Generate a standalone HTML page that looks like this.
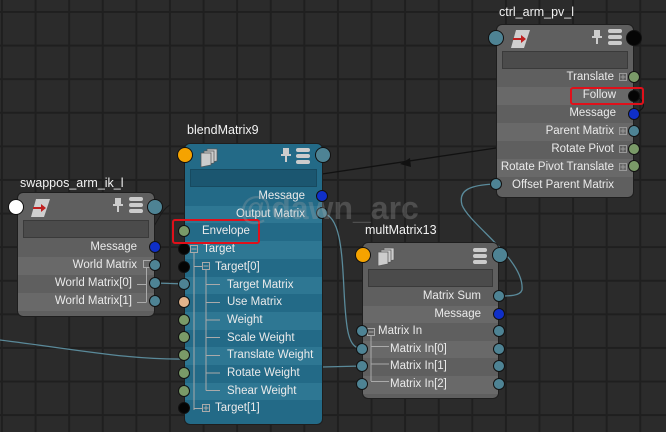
<!DOCTYPE html>
<html><head><meta charset="utf-8"><style>
*{margin:0;padding:0;box-sizing:border-box}
body{width:666px;height:432px;overflow:hidden;position:relative;font-family:"Liberation Sans",sans-serif;font-size:11.5px;
background-color:#2b2b2b;
background-image:linear-gradient(#1f1f1f 0 2px,transparent 2px),linear-gradient(90deg,#1f1f1f 0 2px,transparent 2px);
background-size:33.6px 33.6px;background-position:1px 11px}
.node{position:absolute;border:1px solid #1e1e1e;border-radius:6px;overflow:hidden}
.gray{background:#5f5f5f}
.blue{background:#236a87}
.title{position:absolute;color:#f2f2f2;font-size:12.5px;white-space:nowrap}
.search{position:absolute;left:5px;right:5px;height:18px;border:1px solid #3a3a3a}
.gray .search{background:#4b4b4b}
.blue .search{background:#1b5670;border-color:#174a60}
.row{position:absolute;left:0;right:0;color:#eaeaea;white-space:nowrap;line-height:17.7px;height:17.7px}
.gray .row.l{background:#696969}
.blue .row.l{background:#2e7793}
.r{text-align:right;padding-right:17px}
.p{position:absolute;width:12px;height:12px;border-radius:50%;border:1px solid #111;margin:-0.5px}
.big{width:16px;height:16px}
.g{background:#7a9a68}.b{background:#0f2fc8}.t{background:#4e8394}.k{background:#050505}.o{background:#f5a300}.w{background:#fff}.pe{background:#e2b48c}
.hl{position:absolute;border:2px solid #e0101a;border-radius:3px}
.wm{position:absolute;left:240px;top:190px;font-size:32px;font-weight:bold;color:rgba(170,170,170,0.28);white-space:nowrap;z-index:10}
</style></head><body>

<svg width="666" height="432" style="position:absolute;left:0;top:0" fill="none">
<path d="M0 340 C80 350 130 360 186 359" stroke="#5a8a9a" stroke-width="1.3"/>
<path d="M155 283 L186 284" stroke="#5a8a9a" stroke-width="1.3"/>
<path d="M322 367 L362 366" stroke="#5a8a9a" stroke-width="1.3"/>
<path d="M322 213 C340 215 342 250 344 290 C346 330 348 348 362 349" stroke="#5a8a9a" stroke-width="1.3"/>
<path d="M498 296 C510 296 520 296 522 290 C525 260 470 225 462 205 C458 190 470 185 495 184" stroke="#5a8a9a" stroke-width="1.3"/>
<path d="M496 148 L322 174" stroke="#111" stroke-width="1.3"/>
<path d="M400 164 L410 158 L411 167 Z" fill="#111"/>
<path d="M633 96 C645 98 648 110 635 112 L520 118" stroke="#111" stroke-width="1"/>
<path d="M170 205 C160 210 155 230 140 245" stroke="#1a1a1a" stroke-width="1"/>
</svg>

<!-- swappos -->
<div class="title" style="left:20px;top:176px">swappos_arm_ik_l</div>
<div class="node gray" style="left:17px;top:192px;width:138px;height:125px">
 <svg style="position:absolute;left:12px;top:5px" width="22" height="20"><path d="M6 1 L20 1 L14 19 L1 19 Z" fill="#cfcfcf"/><path d="M3 10 L13 10" stroke="#c02020" stroke-width="2"/><path d="M11 6 L16 10 L11 14Z" fill="#c02020"/></svg>
 <svg style="position:absolute;left:94px;top:5px" width="12" height="14"><rect x="3" y="0" width="6" height="6" fill="#ccc"/><rect x="1" y="6" width="10" height="2" fill="#ccc"/><rect x="5" y="8" width="2" height="6" fill="#ccc"/></svg>
 <svg style="position:absolute;left:111px;top:4px" width="14" height="16"><rect x="0" y="0" width="14" height="4" rx="2" fill="#ccc"/><rect x="0" y="6" width="14" height="4" rx="2" fill="#ccc"/><rect x="0" y="12" width="14" height="4" rx="2" fill="#ccc"/></svg>
 <div class="search" style="top:27px"></div>
 <div class="row r" style="top:46px">Message</div>
 <div class="row r l" style="top:64px">World Matrix</div>
 <div class="row r" style="top:82px;padding-right:22px">World Matrix[0]</div>
 <div class="row r l" style="top:100px;padding-right:22px">World Matrix[1]</div>
 <svg style="position:absolute;left:113px;top:67px" width="20" height="50" fill="none" stroke="#aaa"><rect x="12.5" y="0.5" width="7" height="7"/><path d="M15.5 8 V42 M6 24.5 H15.5 M6 42.5 H15.5"/></svg>
</div>
<div class="p w big" style="left:8px;top:199px"></div>
<div class="p t big" style="left:147px;top:199px"></div>
<div class="p b" style="left:149px;top:241px"></div>
<div class="p t" style="left:149px;top:259px"></div>
<div class="p t" style="left:149px;top:277px"></div>
<div class="p t" style="left:149px;top:295px"></div>

<!-- blendMatrix9 -->
<div class="title" style="left:187px;top:123px">blendMatrix9</div>
<div class="node blue" style="left:184px;top:143px;width:139px;height:282px">
 <svg style="position:absolute;left:14px;top:4px" width="20" height="20"><g fill="#ccc" stroke="#555" stroke-width=".7"><path d="M8 1 L18 1 L18 13 L8 15Z"/><path d="M5 3 L15 3 L15 15 L5 17Z"/><path d="M2 5 L12 5 L12 17 L2 19Z"/></g></svg>
 <svg style="position:absolute;left:95px;top:4px" width="12" height="14"><rect x="3" y="0" width="6" height="6" fill="#ccc"/><rect x="1" y="6" width="10" height="2" fill="#ccc"/><rect x="5" y="8" width="2" height="6" fill="#ccc"/></svg>
 <svg style="position:absolute;left:111px;top:4px" width="14" height="16"><rect x="0" y="0" width="14" height="4" rx="2" fill="#ccc"/><rect x="0" y="6" width="14" height="4" rx="2" fill="#ccc"/><rect x="0" y="12" width="14" height="4" rx="2" fill="#ccc"/></svg>
 <div class="search" style="top:25px"></div>
 <div class="row r" style="top:44px">Message</div>
 <div class="row r l" style="top:61.7px">Output Matrix</div>
 <div class="row" style="top:79.4px;padding-left:17px">Envelope</div>
 <div class="row l" style="top:97.1px;padding-left:18px">Target</div>
 <div class="row" style="top:114.8px;padding-left:30px">Target[0]</div>
 <div class="row l" style="top:132.5px;padding-left:42px">Target Matrix</div>
 <div class="row" style="top:150.2px;padding-left:42px">Use Matrix</div>
 <div class="row l" style="top:167.9px;padding-left:42px">Weight</div>
 <div class="row" style="top:185.6px;padding-left:42px">Scale Weight</div>
 <div class="row l" style="top:203.3px;padding-left:42px">Translate Weight</div>
 <div class="row" style="top:221px;padding-left:42px">Rotate Weight</div>
 <div class="row l" style="top:238.7px;padding-left:42px">Shear Weight</div>
 <div class="row" style="top:256.4px;padding-left:30px">Target[1]</div>
 <svg style="position:absolute;left:5px;top:101px" width="40" height="172" fill="none" stroke="#aaa"><rect x="0.5" y="0.5" width="7" height="7"/><path d="M1.5 4 H6.5"/>
 <path d="M4 8 V165 M4 21.5 H12.5 M4 163.5 H12.5"/><rect x="12.5" y="17.5" width="7" height="7"/><path d="M13.5 21 H18.5"/>
 <rect x="12.5" y="159.5" width="7" height="7"/><path d="M13.5 163 H18.5 M16 160.5 V165.5"/>
 <path d="M16 25 V145.5 M16 39.5 H30 M16 57.5 H30 M16 75 H30 M16 92.5 H30 M16 110.5 H30 M16 128 H30 M16 145.5 H30"/></svg>
</div>
<div class="p o big" style="left:177px;top:147px"></div>
<div class="p t big" style="left:315px;top:147px"></div>
<div class="p b" style="left:316px;top:190px"></div>
<div class="p t" style="left:316px;top:207px"></div>
<div class="p g" style="left:178px;top:225px"></div>
<div class="p k" style="left:178px;top:243px"></div>
<div class="p k" style="left:178px;top:261px"></div>
<div class="p t" style="left:178px;top:278px"></div>
<div class="p pe" style="left:178px;top:296px"></div>
<div class="p g" style="left:178px;top:314px"></div>
<div class="p g" style="left:178px;top:331px"></div>
<div class="p g" style="left:178px;top:349px"></div>
<div class="p g" style="left:178px;top:367px"></div>
<div class="p g" style="left:178px;top:385px"></div>
<div class="p k" style="left:178px;top:402px"></div>
<div class="hl" style="left:172px;top:219px;width:88px;height:25px"></div>

<!-- multMatrix13 -->
<div class="title" style="left:365px;top:223px">multMatrix13</div>
<div class="node gray" style="left:362px;top:242px;width:137px;height:157px">
 <svg style="position:absolute;left:13px;top:4px" width="20" height="20"><g fill="#ccc" stroke="#555" stroke-width=".7"><path d="M8 1 L18 1 L18 13 L8 15Z"/><path d="M5 3 L15 3 L15 15 L5 17Z"/><path d="M2 5 L12 5 L12 17 L2 19Z"/></g></svg>
 <svg style="position:absolute;left:110px;top:5px" width="14" height="16"><rect x="0" y="0" width="14" height="4" rx="2" fill="#ccc"/><rect x="0" y="6" width="14" height="4" rx="2" fill="#ccc"/><rect x="0" y="12" width="14" height="4" rx="2" fill="#ccc"/></svg>
 <div class="search" style="top:26px"></div>
 <div class="row r" style="top:45px">Matrix Sum</div>
 <div class="row r l" style="top:62.6px">Message</div>
 <div class="row" style="top:80.2px;padding-left:15px">Matrix In</div>
 <div class="row l" style="top:97.8px;padding-left:27px">Matrix In[0]</div>
 <div class="row" style="top:115.4px;padding-left:27px">Matrix In[1]</div>
 <div class="row l" style="top:133px;padding-left:27px">Matrix In[2]</div>
 <svg style="position:absolute;left:4px;top:85px" width="26" height="60" fill="none" stroke="#aaa"><rect x="0.5" y="0.5" width="7" height="7"/><path d="M1.5 4 H6.5 M4 8 V53 M4 18.5 H22 M4 36 H22 M4 53.5 H22"/></svg>
</div>
<div class="p o big" style="left:355px;top:247px"></div>
<div class="p t big" style="left:492px;top:247px"></div>
<div class="p t" style="left:493px;top:290px"></div>
<div class="p b" style="left:493px;top:308px"></div>
<div class="p t" style="left:356px;top:325px"></div><div class="p t" style="left:493px;top:325px"></div>
<div class="p t" style="left:356px;top:343px"></div><div class="p t" style="left:493px;top:343px"></div>
<div class="p t" style="left:356px;top:360px"></div><div class="p t" style="left:493px;top:360px"></div>
<div class="p t" style="left:356px;top:378px"></div><div class="p t" style="left:493px;top:378px"></div>

<!-- ctrl_arm_pv_l -->
<div class="title" style="left:499px;top:5px">ctrl_arm_pv_l</div>
<div class="node gray" style="left:496px;top:24px;width:138px;height:174px">
 <svg style="position:absolute;left:13px;top:4px" width="22" height="20"><path d="M6 1 L20 1 L14 19 L1 19 Z" fill="#cfcfcf"/><path d="M3 10 L13 10" stroke="#c02020" stroke-width="2"/><path d="M11 6 L16 10 L11 14Z" fill="#c02020"/></svg>
 <svg style="position:absolute;left:94px;top:5px" width="12" height="14"><rect x="3" y="0" width="6" height="6" fill="#ccc"/><rect x="1" y="6" width="10" height="2" fill="#ccc"/><rect x="5" y="8" width="2" height="6" fill="#ccc"/></svg>
 <svg style="position:absolute;left:111px;top:4px" width="14" height="16"><rect x="0" y="0" width="14" height="4" rx="2" fill="#ccc"/><rect x="0" y="6" width="14" height="4" rx="2" fill="#ccc"/><rect x="0" y="12" width="14" height="4" rx="2" fill="#ccc"/></svg>
 <div class="search" style="top:26px"></div>
 <div class="row r" style="top:44px;padding-right:19px">Translate</div>
 <div class="row r l" style="top:62px;padding-right:17px">Follow</div>
 <div class="row r" style="top:80px">Message</div>
 <div class="row r l" style="top:98px;padding-right:19px">Parent Matrix</div>
 <div class="row r" style="top:116px;padding-right:19px">Rotate Pivot</div>
 <div class="row r l" style="top:134px;padding-right:19px">Rotate Pivot Translate</div>
 <div class="row" style="top:152px;padding-left:15px">Offset Parent Matrix</div>
 <svg style="position:absolute;left:122px;top:48px" width="10" height="100" fill="none" stroke="#999"><rect x="0.5" y="0.5" width="7" height="7"/><path d="M1.5 4 H6.5 M4 1.5 V6.5"/><rect x="0.5" y="54.5" width="7" height="7"/><path d="M1.5 58 H6.5 M4 55.5 V60.5"/><rect x="0.5" y="72.5" width="7" height="7"/><path d="M1.5 76 H6.5 M4 73.5 V78.5"/><rect x="0.5" y="90.5" width="7" height="7"/><path d="M1.5 94 H6.5 M4 91.5 V96.5"/></svg>
</div>
<div class="p t big" style="left:488px;top:30px"></div>
<div class="p k big" style="left:626px;top:30px"></div>
<div class="p g" style="left:628px;top:71px"></div>
<div class="p k" style="left:628px;top:90px"></div>
<div class="p b" style="left:628px;top:108px"></div>
<div class="p t" style="left:628px;top:125px"></div>
<div class="p g" style="left:628px;top:143px"></div>
<div class="p g" style="left:628px;top:160px"></div>
<div class="p t" style="left:490px;top:178px"></div>
<div class="hl" style="left:570px;top:87px;width:74px;height:18px"></div>

<div class="wm">@dawn_arc</div>
</body></html>
